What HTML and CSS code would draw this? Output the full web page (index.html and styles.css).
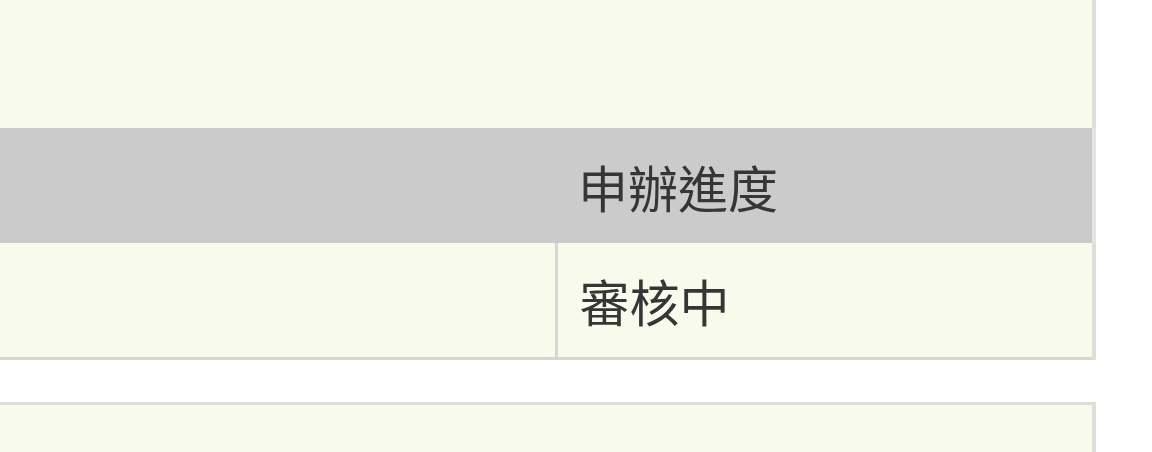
FILE: index.html
```html
<!DOCTYPE html>
<html lang="zh-Hant">
<head>
<meta charset="utf-8">
<link rel="stylesheet" href="styles.css">
</head>
<body>
<div class="page">
  <div class="panel panel-top"></div>
  <table class="status-table">
    <tr class="head-row">
      <th class="cell-left"></th>
      <th class="cell-right">申辦進度</th>
    </tr>
    <tr class="body-row">
      <td class="cell-left"></td>
      <td class="cell-right">審核中</td>
    </tr>
  </table>
  <div class="panel panel-bottom"></div>
</div>
</body>
</html>
```
FILE: styles.css
```css
html, body {
  margin: 0;
  padding: 0;
  background: #ffffff;
}
.page {
  width: 1096px;
  font-family: "Noto Sans CJK TC", "Noto Sans", sans-serif;
  color: #363636;
}
.panel {
  background: #f8fbeb;
  border-right: 4px solid #dededa;
}
.panel-top {
  height: 128px;
}
.panel-bottom {
  margin-top: 42px;
  height: 48px;
  border-top: 3px solid #dededa;
}
.status-table {
  width: 1096px;
  border-collapse: collapse;
  table-layout: fixed;
}
.status-table th,
.status-table td {
  padding: 0 0 0 22px;
  text-align: left;
  font-size: 50px;
  font-weight: normal;
  line-height: 1;
  vertical-align: middle;
  box-sizing: border-box;
}
.status-table .cell-left {
  width: 556px;
  padding: 0;
}
.head-row th {
  height: 115px;
  background: #cbcbcb;
  color: #363636;
}
.head-row th.cell-right {
  border-right: 4px solid #e4e4e0;
}
.body-row td {
  height: 115px;
  background: #f8fbeb;
  border-bottom: 3px solid #d6d6d2;
}
.body-row td.cell-right {
  border-left: 3px solid #d6d6d2;
  border-right: 4px solid #dededa;
}
```
